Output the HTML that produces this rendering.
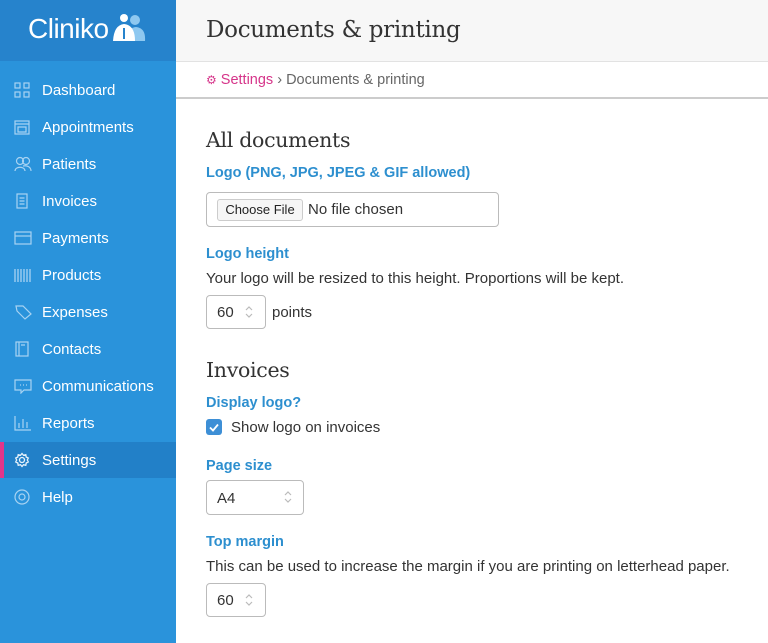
<!DOCTYPE html>
<html><head><meta charset="utf-8"><style>
*{margin:0;padding:0;box-sizing:border-box}
body{width:768px;height:643px;overflow:hidden;font-family:"Liberation Sans",sans-serif;background:#fff;position:relative;color:#333}
#sb{position:absolute;left:0;top:0;width:176px;height:643px;background:#2a93db}
#logo{height:61px;background:#2683cc;position:relative}
#logo span{position:absolute;left:28px;top:13px;color:#fff;font-size:28px;letter-spacing:-0.5px}
.nav{position:absolute;left:0;width:176px;height:36px;color:#fff;font-size:15px;line-height:36px}
.nav .t{position:absolute;left:42px;top:1px}
.nav svg{position:absolute;left:14px;top:10px}
.act{background:#2280c8}
.act:before{content:"";position:absolute;left:0;top:0;width:4px;height:36px;background:#e2358a}
#hd{position:absolute;left:176px;top:0;width:592px;height:62px;background:#f7f7f7;border-bottom:1px solid #e2e2e2}
#hd h1{font-family:"DejaVu Serif","Liberation Serif",serif;font-weight:normal;font-size:23px;position:absolute;left:30px;top:17px;color:#333;letter-spacing:-0.3px}
#bc{position:absolute;left:176px;top:62px;width:592px;height:37px;border-bottom:2px solid #ccc;font-size:14.5px;line-height:37px;color:#666}
#bc .s{color:#d6358a}
h2{position:absolute;left:206px;font-family:"DejaVu Serif","Liberation Serif",serif;font-weight:normal;font-size:20.5px;color:#333;letter-spacing:-0.3px}
.lb{position:absolute;left:206px;color:#2d8fcf;font-weight:bold;font-size:14.5px}
.tx{position:absolute;font-size:15px;color:#333}
.box{position:absolute;border:1px solid #bbb;border-radius:4px;background:#fff}
.arr{position:absolute}
</style></head><body>
<div id="sb">
<div id="logo"><span>Cliniko</span>
<svg style="position:absolute;left:112px;top:12px" width="34" height="30" viewBox="0 0 34 30"><circle cx="23" cy="8" r="5" fill="#8ec8f0"/><path d="M14 29 Q14 16 24 15 Q34 16 33 29Z" fill="#8ec8f0"/><circle cx="12" cy="6" r="4" fill="#fff"/><path d="M1 29 Q2 13 12 12 Q23 13 23 29Z" fill="#fff"/><path d="M11 16 L13 16 L13 27 L11 27Z" fill="#2683cc"/></svg></div>
</div>
<div class="nav" style="top:72px"><svg width="16" height="16" fill="none" stroke="#a8d3f2" stroke-width="1.2"><rect x="1" y="1" width="5" height="5"/><rect x="10" y="1" width="5" height="5"/><rect x="1" y="10" width="5" height="5"/><rect x="10" y="10" width="5" height="5"/></svg><span class="t">Dashboard</span></div>
<div class="nav" style="top:109px"><svg width="16" height="16" fill="none" stroke="#a8d3f2" stroke-width="1.2"><rect x="1" y="2" width="14" height="13"/><path d="M1 5h14M4 8h8v5H4z"/></svg><span class="t">Appointments</span></div>
<div class="nav" style="top:146px"><svg width="18" height="16" fill="none" stroke="#a8d3f2" stroke-width="1.2"><circle cx="6" cy="5" r="3.5"/><circle cx="12" cy="5" r="3.5"/><path d="M1 15c0-5 10-5 10 0M9 10c4-1 8 1 8 5"/></svg><span class="t">Patients</span></div>
<div class="nav" style="top:183px"><svg width="16" height="16" fill="none" stroke="#a8d3f2" stroke-width="1.2"><rect x="3" y="1" width="10" height="14"/><path d="M5.5 5h5M5.5 8h5M5.5 11h5"/></svg><span class="t">Invoices</span></div>
<div class="nav" style="top:220px"><svg width="18" height="16" fill="none" stroke="#a8d3f2" stroke-width="1.2"><rect x="1" y="2" width="16" height="12"/><path d="M1 6h16"/></svg><span class="t">Payments</span></div>
<div class="nav" style="top:257px"><svg width="18" height="16" fill="none" stroke="#a8d3f2" stroke-width="1.3"><path d="M1 2v13M4 2v13M7 2v13M10 2v13M13 2v13M16 2v13"/></svg><span class="t">Products</span></div>
<div class="nav" style="top:294px"><svg width="18" height="16" fill="none" stroke="#a8d3f2" stroke-width="1.2"><path d="M2 2h7l8 8-6 5-8-8z"/></svg><span class="t">Expenses</span></div>
<div class="nav" style="top:331px"><svg width="16" height="16" fill="none" stroke="#a8d3f2" stroke-width="1.2"><rect x="2" y="1" width="12" height="14"/><path d="M5 1v14M7 4h4"/></svg><span class="t">Contacts</span></div>
<div class="nav" style="top:368px"><svg width="18" height="16" fill="none" stroke="#a8d3f2" stroke-width="1.2"><path d="M1 2h16v10H10l-3 3v-3H1z"/><path d="M6 7h1M9 7h1M12 7h1"/></svg><span class="t">Communications</span></div>
<div class="nav" style="top:405px"><svg width="18" height="16" fill="none" stroke="#a8d3f2" stroke-width="1.2"><path d="M1 1v14h16M5 13V8M9 13V4M13 13V7"/></svg><span class="t">Reports</span></div>
<div class="nav act" style="top:442px"><svg width="16" height="16" fill="none" stroke="#e6f2fb" stroke-width="1.3"><circle cx="8" cy="8" r="2.5"/><path d="M8 1.5l1.5 1.8 2.3-.6.4 2.3 2.1 1-1 2 1 2-2.1 1-.4 2.3-2.3-.6L8 14.5l-1.5-1.8-2.3.6-.4-2.3-2.1-1 1-2-1-2 2.1-1 .4-2.3 2.3.6z"/></svg><span class="t">Settings</span></div>
<div class="nav" style="top:479px"><svg width="16" height="16" fill="none" stroke="#a8d3f2" stroke-width="1.2"><circle cx="8" cy="8" r="7"/><circle cx="8" cy="8" r="3"/></svg><span class="t">Help</span></div>

<div id="hd"><h1>Documents &amp; printing</h1></div>
<div id="bc"><span style="position:absolute;left:30px"><span class="s"><span style="font-size:12px">⚙</span> Settings</span> › Documents &amp; printing</span></div>

<h2 style="top:128px">All documents</h2>
<div class="lb" style="top:165px">Logo (PNG, JPG, JPEG &amp; GIF allowed)</div>
<div class="box" style="left:206px;top:192px;width:293px;height:35px"></div>
<div style="position:absolute;left:217px;top:199px;width:86px;height:22px;border:1px solid #ccc;border-radius:3px;background:#f6f6f6;font-size:13px;line-height:20px;text-align:center;color:#222">Choose File</div>
<div class="tx" style="left:308px;top:201px">No file chosen</div>
<div class="lb" style="top:246px">Logo height</div>
<div class="tx" style="left:206px;top:270px">Your logo will be resized to this height. Proportions will be kept.</div>
<div class="box" style="left:206px;top:295px;width:60px;height:34px"></div>
<div class="tx" style="left:217px;top:304px">60</div>
<svg class="arr" style="left:244px;top:304px" width="10" height="16" fill="none" stroke="#bbb" stroke-width="1.2"><path d="M2 6l3-3 3 3M2 10l3 3 3-3"/></svg>
<div class="tx" style="left:272px;top:304px">points</div>

<h2 style="top:358px">Invoices</h2>
<div class="lb" style="top:395px">Display logo?</div>
<div style="position:absolute;left:206px;top:419px;width:16px;height:16px;background:#3d8fd6;border-radius:3px"><svg width="16" height="16"><path d="M4 8.5l3 3 5-6" stroke="#fff" stroke-width="1.8" fill="none"/></svg></div>
<div class="tx" style="left:231px;top:419px">Show logo on invoices</div>
<div class="lb" style="top:458px">Page size</div>
<div class="box" style="left:206px;top:480px;width:98px;height:35px"></div>
<div class="tx" style="left:217px;top:490px">A4</div>
<svg class="arr" style="left:283px;top:489px" width="10" height="16" fill="none" stroke="#bbb" stroke-width="1.2"><path d="M2 6l3-3 3 3M2 10l3 3 3-3"/></svg>
<div class="lb" style="top:534px">Top margin</div>
<div class="tx" style="left:206px;top:558px">This can be used to increase the margin if you are printing on letterhead paper.</div>
<div class="box" style="left:206px;top:583px;width:60px;height:34px"></div>
<div class="tx" style="left:217px;top:592px">60</div>
<svg class="arr" style="left:244px;top:592px" width="10" height="16" fill="none" stroke="#bbb" stroke-width="1.2"><path d="M2 6l3-3 3 3M2 10l3 3 3-3"/></svg>
</body></html>
